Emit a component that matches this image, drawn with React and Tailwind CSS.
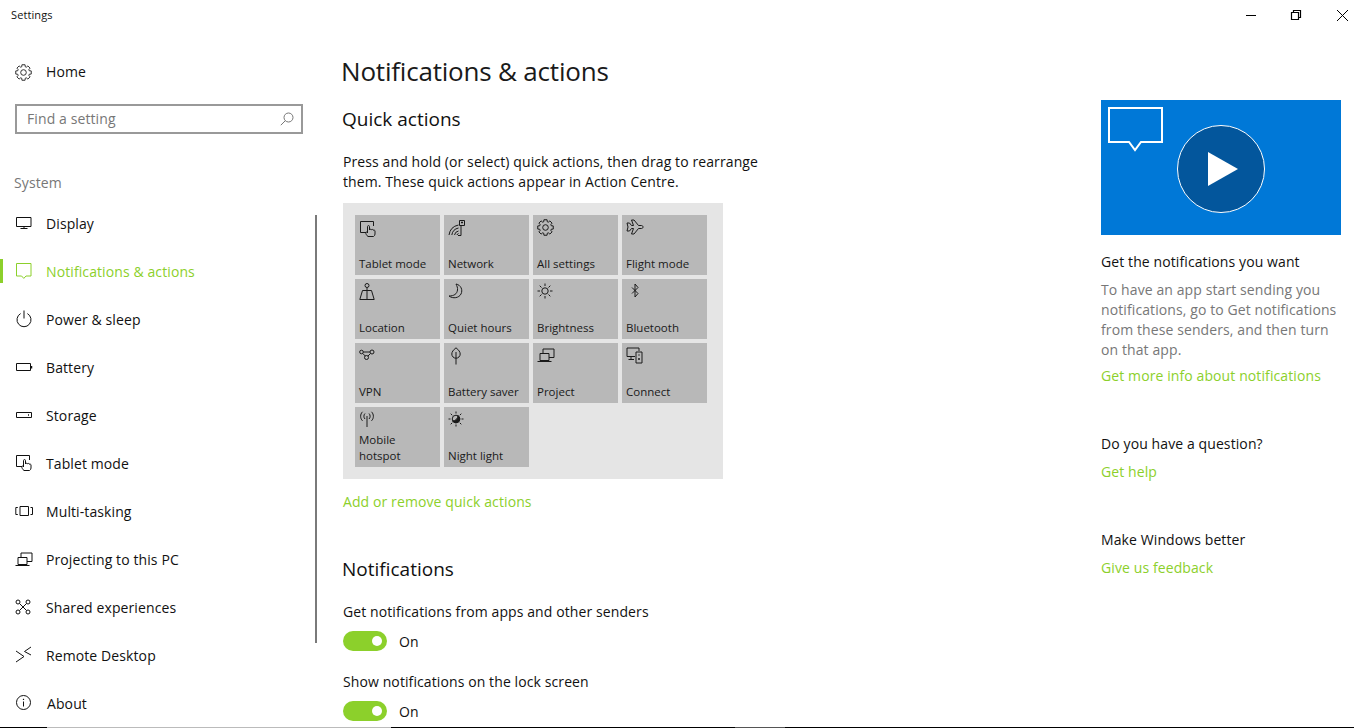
const seg = { fontFamily: "'Open Sans', 'Noto Sans', sans-serif" }

const S = ({ children, w = 20, h = 20, className = '' }) => (
  <svg width={w} height={h} viewBox={`0 0 ${w} ${h}`} fill="none" stroke="currentColor" strokeWidth="1" className={`block shrink-0 ${className}`}>
    {children}
  </svg>
)

// gear outline, 8 teeth
function gearPath(c, outer, inner) {
  const pts = []
  for (let i = 0; i < 8; i++) {
    const a = (i * Math.PI) / 4
    ;[[-0.3, inner], [-0.2, outer], [0.2, outer], [0.3, inner]].forEach(([d, r]) => {
      pts.push(`${(c + r * Math.cos(a + d)).toFixed(2)} ${(c + r * Math.sin(a + d)).toFixed(2)}`)
    })
  }
  return 'M' + pts.join('L') + 'z'
}

const Gear = () => (
  <S w={17} h={17}>
    <path d={gearPath(8.5, 7.9, 6)} />
    <circle cx="8.5" cy="8.5" r="2.8" />
  </S>
)
const Monitor = () => <S w={18} h={14}><path d="M1.5 1.5h14.500v9H1.500zM9 10.500v2.500M5.500 12.500h7" /></S>
const Chat = () => <S w={18} h={18}><path d="M1.500 1.500h14.500v12.500h-5l-2.200 2.400-2.200-2.400H1.500z" /></S>
const Power = () => <S w={18} h={18}><path d="M5.600 3.600a7 7 0 1 0 6.800 0M9 .5v8" /></S>
const Battery = () => <S w={18} h={10}><path d="M1.500 1.500h14v7h-14z" /><path d="M16.500 4v2.500" strokeWidth="1.500" /></S>
const Storage = () => <S w={18} h={8}><path d="M1.500 1.500h15v5h-15z" /><path d="M13 4h1" strokeWidth="1.500" /></S>
const Tablet = () => (
  <S w={18} h={18}>
    <path d="M7 12.500H1.500v-11h13V6" />
    <path d="M9 16.500c-1.500-1-2-2.500-2.500-4 .5-.8 1.500-.5 2 .5V6.500c0-1.200 2-1.200 2 0V10c0-1 2-1 2 0 0-.8 2-.8 2 .3 0-.6 1.500-.3 1.500.7v3c0 1-.5 2-1.500 2.500z" />
  </S>
)
const Multi = () => <S w={18} h={12}><path d="M5 1.500h8.500v9H5zM2.800 2.500H.8v7h2M15.500 2.500h2v7h-2" /></S>
const Project = () => <S w={18} h={15}><path d="M6 5V1h11v8.500H12M3 5.500h9v7H3zM.5 13.500h14" /></S>
const Shared = () => (
  <S w={16} h={16}>
    <circle cx="3" cy="3" r="2" /><circle cx="13" cy="3" r="2" /><circle cx="3" cy="13" r="2" /><circle cx="13" cy="13" r="2" />
    <path d="M4.500 4.500l7 7M11.500 4.500l-7 7" />
  </S>
)
const Remote = () => <S w={18} h={18}><path d="M1 5l8 5.500-8 5.500M16 1l-6.500 4.500 6.500 3.500" /></S>
const About = () => <S w={18} h={18}><circle cx="8.500" cy="8.500" r="7" /><path d="M8.500 7.500v5" /><path d="M8.500 4.800v1.200" strokeWidth="1.200" /></S>

const Network = () => (
  <S w={18} h={18}>
    <path d="M1 15a12 12 0 0 1 9.500-10M3.800 15a8.500 8.500 0 0 1 6.700-7M6.500 15a5 5 0 0 1 4-4M9 15a2 2 0 0 1 1.500-1.500" />
    <path d="M13 5.500V15.500M10 15.500h3" />
    <path d="M11.500.5h5v5h-5z" />
    <path d="M13 2.500h2" strokeWidth="1.500" />
  </S>
)
const Plane = () => (
  <S w={18} h={16}><path d="M1 4h2.500l2 2.500h2L5.500 1H8l4.500 5.500h3c2 0 2 3 0 3h-3L8 15H5.500l2-5.500h-2l-2 2.500H1l1-4z" /></S>
)
const Location = () => (
  <S w={16} h={18}><circle cx="8" cy="2.500" r="2" /><path d="M8 4.500v12M3.500 7.500h9M3.500 7.500L.8 16.500h14.400l-2.700-9" /></S>
)
const Moon = () => <S w={16} h={17}><path d="M8 1c5 1 7 6 5 10-2 4-8 5-12 2 5 0 8-2 8.500-6C9.800 5 9 3 8 1z" /></S>
const Sun = () => (
  <S w={16} h={16}>
    <circle cx="8" cy="8" r="3.200" />
    <path d="M8 .5v2.500M8 13v2.500M.5 8H3M13 8h2.500M2.700 2.700l1.800 1.800M11.500 11.500l1.800 1.800M13.300 2.700l-1.800 1.800M4.500 11.500l-1.800 1.800" />
  </S>
)
const Bt = () => <S w={8} h={16}><path d="M1 4.500l6 6-3 3.500V1l3 3.500-6 6" /></S>
const Vpn = () => (
  <S w={16} h={12}>
    <circle cx="2.500" cy="3" r="1.800" /><circle cx="7.500" cy="8.500" r="2" /><circle cx="13" cy="3" r="2" />
    <path d="M4.300 3h6.700M3.800 4.500l2.500 2.500M11.500 4.500L9 7" />
  </S>
)
const Leaf = () => <S w={12} h={18}><path d="M6 .8C3.200 3 1.800 5 1.800 7a4.200 4.200 0 0 0 8.400 0C10.200 5 8.800 3 6 .8zM6 5v12.500" /></S>
const Connect = () => (
  <S w={18} h={18}>
    <path d="M9 9.500H1V1h12v3M5 9.500v3M2.500 12.500h5.500" />
    <path d="M10 5h6v11h-6z" />
    <path d="M13 7.500v1M13 11v2" strokeWidth="1.500" />
  </S>
)
const Hotspot = () => (
  <S w={16} h={16}>
    <path d="M8 5v11" />
    <path d="M6 2.500c-1.500 1.500-1.500 4 0 5.500M10 2.500c1.500 1.500 1.500 4 0 5.500M3.500.8c-2.500 2.500-2.500 6.500 0 9M12.500.8c2.500 2.500 2.500 6.500 0 9" />
  </S>
)
const NightSun = () => (
  <S w={16} h={16}>
    <circle cx="8" cy="8" r="3.800" />
    <path d="M4.700 9.900A3.800 3.800 0 1 0 9.900 4.700C10 7.500 7.500 10 4.700 9.900z" fill="currentColor" />
    <path d="M8 .5v2M8 13.500v2M.5 8h2M13.500 8h2M2.700 2.700l1.500 1.500M11.800 11.800l1.500 1.500M13.300 2.700l-1.500 1.500M4.200 11.800l-1.500 1.500" />
  </S>
)

const nav = [
  ['Display', Monitor],
  ['Notifications & actions', Chat, true],
  ['Power & sleep', Power],
  ['Battery', Battery],
  ['Storage', Storage],
  ['Tablet mode', Tablet],
  ['Multi-tasking', Multi],
  ['Projecting to this PC', Project],
  ['Shared experiences', Shared],
  ['Remote Desktop', Remote],
  ['About', About],
]

const tiles = [
  ['Tablet mode', Tablet, 'mt-[1px]'], ['Network', Network, 'mt-[1px]'], ['All settings', Gear, ''], ['Flight mode', Plane, ''],
  ['Location', Location, ''], ['Quiet hours', Moon, ''], ['Brightness', Sun, ''], ['Bluetooth', Bt, 'ml-[5px]'],
  ['VPN', Vpn, 'mt-[2px]'], ['Battery saver', Leaf, 'ml-[2px]'], ['Project', Project, 'mt-[1px]'], ['Connect', Connect, ''],
  ['Mobile hotspot', Hotspot, ''], ['Night light', NightSun, ''],
]

function Toggle() {
  return (
    <div className="flex items-center gap-3 h-5">
      <div className="w-11 h-5 rounded-full bg-[#8cd02b] flex items-center justify-end pr-[5px]">
        <div className="w-2.5 h-2.5 rounded-full bg-white" />
      </div>
      <span className="text-[14px]">On</span>
    </div>
  )
}

export default function App() {
  return (
    <div className="h-[728px] overflow-hidden bg-white text-[#111] relative tracking-[0.1px]" style={seg}>
      <header className="h-8 flex items-center justify-between">
        <span className="pl-[11px] text-[11px] pb-[1px]">Settings</span>
        <div className="flex items-center text-black pb-[2px]">
          <div className="w-[45px] flex justify-center"><S w={12} h={12}><path d="M1 6.500h10" /></S></div>
          <div className="w-[45px] flex justify-center"><S w={12} h={12}><path d="M1.500 3.500h7v7h-7zM3.500 3.500v-2h7v7h-2" strokeWidth="1.200" /></S></div>
          <div className="w-[24px] ml-[12px] flex justify-center"><S w={13} h={13}><path d="M1 1l11 11M12 1L1 12" /></S></div>
        </div>
      </header>

      <div className="flex">
        <aside className="w-[318px] shrink-0 relative">
          <div className="h-[48px] mt-[16px] flex items-center pl-[15px] gap-[14px] text-[#333]">
            <Gear />
            <span className="text-[#111] text-[14px] pb-[1px]">Home</span>
          </div>
          <div className="ml-[15px] mr-[15px] mt-[8px] w-[288px] h-[30px] border-2 border-[#999] flex items-center justify-between pl-[10px] pr-[7px] text-[14px] text-[#777]">
            <span className="pb-[2px]">Find a setting</span>
            <svg width="14" height="14" viewBox="0 0 14 14" fill="none" stroke="#777"><circle cx="8.500" cy="5.500" r="4.500" /><path d="M5.300 8.700L.8 13.200" /></svg>
          </div>
          <div className="pl-[14px] mt-[39px] text-[14px] text-[#777] leading-5">System</div>
          <nav className="mt-[6px]">
            {nav.map(([label, Icon, active]) => (
              <div key={label} className={`h-12 flex items-center relative pl-[15px] ${active ? 'text-[#8cd02b]' : ''}`}>
                {active && <div className="absolute left-0 top-[12px] w-[3px] h-[24px] bg-[#8cd02b]" />}
                <div className="w-[31px] flex items-center"><Icon /></div>
                <span className={`text-[14px] ${label === 'About' ? 'ml-[1px]' : ''}`}>{label}</span>
              </div>
            ))}
          </nav>
          <div className="absolute left-[315px] top-[183px] w-[2px] h-[428px] bg-[#7a7a7a]" />
        </aside>

        <main className="w-[700px] shrink-0 pl-[23px]">
          <h1 className="text-[26px] leading-8 mt-[23px] text-[#1a1a1a] tracking-[-0.2px]">Notifications &amp; actions</h1>
          <h2 className="text-[19px] leading-6 mt-[20px] ml-[1px] tracking-normal">Quick actions</h2>
          <p className="text-[14px] leading-5 mt-[21px] ml-[2px] w-[440px]">
            Press and hold (or select) quick actions, then drag to rearrange<br />them. These quick actions appear in Action Centre.
          </p>
          <div className="mt-[11px] ml-[2px] w-[380px] h-[276px] bg-[#e5e5e5] pl-3 pt-3">
            <div className="grid grid-cols-[85px_85px_85px_85px] auto-rows-[60px] gap-x-[4px] gap-y-[4px]">
              {tiles.map(([label, Icon, offset]) => (
                <div key={label} className="bg-[#b8b8b8] flex flex-col justify-between pl-1 pt-1 pb-[3px] text-[#1a1a1a]">
                  <div className={offset}><Icon /></div>
                  <span className="text-[11.5px] leading-4 w-[78px] tracking-normal">{label}</span>
                </div>
              ))}
            </div>
          </div>
          <div className="mt-[13px] ml-[2px] text-[14px] leading-5 text-[#8cd02b]">Add or remove quick actions</div>
          <h2 className="text-[19px] leading-6 mt-[45px] ml-[1px] tracking-normal">Notifications</h2>
          <div className="text-[14px] leading-5 mt-[21px] ml-[2px]">Get notifications from apps and other senders</div>
          <div className="mt-[9px] ml-[2px]"><Toggle /></div>
          <div className="text-[14px] leading-5 mt-[21px] ml-[2px]">Show notifications on the lock screen</div>
          <div className="mt-[9px] ml-[2px]"><Toggle /></div>
        </main>

        <section className="ml-[83px] w-[240px] shrink-0">
          <div className="mt-[68px] h-[135px] bg-[#0078d7] relative flex items-center justify-center">
            <svg width="56" height="48" viewBox="0 0 56 48" fill="none" stroke="white" strokeWidth="2" className="absolute left-[7px] top-[7px]">
              <path d="M1 1h53v34H33l-6 8-6-8H1z" />
            </svg>
            <div className="w-[88px] h-[88px] rounded-full bg-[#03569c] border border-white flex items-center justify-center mt-[2px]">
              <svg width="30" height="34" viewBox="0 0 30 34" className="ml-[4px]"><path d="M0 0l30 17L0 34z" fill="white" /></svg>
            </div>
          </div>
          <h3 className="text-[14px] leading-5 mt-[17px]">Get the notifications you want</h3>
          <p className="text-[14px] leading-5 mt-[8px] text-[#777]">To have an app start sending you notifications, go to Get notifications from these senders, and then turn on that app.</p>
          <div className="text-[14px] leading-5 mt-[6px] text-[#8cd02b]">Get more info about notifications</div>
          <h3 className="text-[14px] leading-5 mt-[48px]">Do you have a question?</h3>
          <div className="text-[14px] leading-5 mt-[8px] text-[#8cd02b]">Get help</div>
          <h3 className="text-[14px] leading-5 mt-[48px]">Make Windows better</h3>
          <div className="text-[14px] leading-5 mt-[8px] text-[#8cd02b]">Give us feedback</div>
        </section>
      </div>
      <div className="absolute left-0 right-0 bottom-0 h-px flex">
        <div className="w-[47px] bg-black" />
        <div className="w-[344px] bg-[#bbb]" />
        <div className="w-[344px] bg-black" />
        <div className="w-[50px] bg-[#555]" />
        <div className="flex-1 bg-black" />
      </div>
    </div>
  )
}
